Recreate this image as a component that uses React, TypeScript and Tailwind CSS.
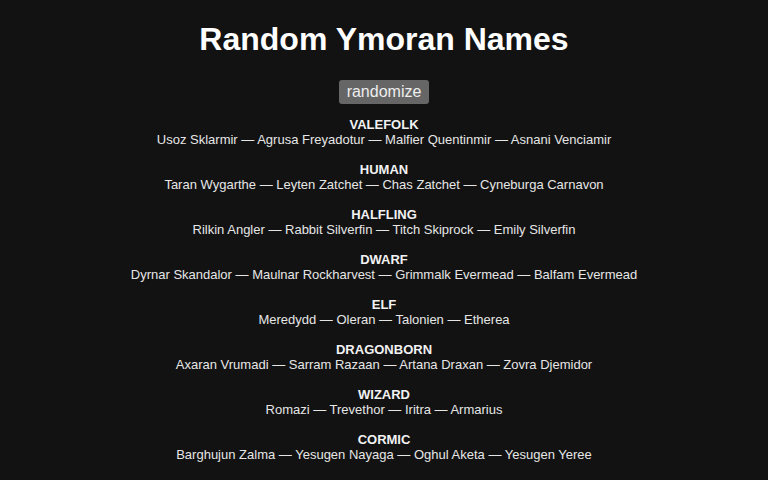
const groups: { race: string; names: string[] }[] = [
  { race: "VALEFOLK", names: ["Usoz Sklarmir", "Agrusa Freyadotur", "Malfier Quentinmir", "Asnani Venciamir"] },
  { race: "HUMAN", names: ["Taran Wygarthe", "Leyten Zatchet", "Chas Zatchet", "Cyneburga Carnavon"] },
  { race: "HALFLING", names: ["Rilkin Angler", "Rabbit Silverfin", "Titch Skiprock", "Emily Silverfin"] },
  { race: "DWARF", names: ["Dyrnar Skandalor", "Maulnar Rockharvest", "Grimmalk Evermead", "Balfam Evermead"] },
  { race: "ELF", names: ["Meredydd", "Oleran", "Talonien", "Etherea"] },
  { race: "DRAGONBORN", names: ["Axaran Vrumadi", "Sarram Razaan", "Artana Draxan", "Zovra Djemidor"] },
  { race: "WIZARD", names: ["Romazi", "Trevethor", "Iritra", "Armarius"] },
  { race: "CORMIC", names: ["Barghujun Zalma", "Yesugen Nayaga", "Oghul Aketa", "Yesugen Yeree"] },
];

export default function App() {
  return (
    <div
      className="min-h-[480px] w-full bg-[#121212] text-white text-center"
      style={{ fontFamily: '"Liberation Sans", Arial, sans-serif' }}
    >
      <h1 className="pt-[21px] text-[32px] leading-[37px] font-bold text-white">Random Ymoran Names</h1>
      <div className="mt-[22px] flex justify-center">
        <button className="h-[24px] px-[8px] rounded-[3px] bg-[#666666] text-[16px] leading-[24px] text-[#eeeeee]">
          randomize
        </button>
      </div>
      <div className="mt-[13px] flex flex-col gap-[15px]">
        {groups.map((g) => (
          <div key={g.race} className="text-[13px] leading-[15px]">
            <div className="font-bold text-[#f2f2f2]">{g.race}</div>
            <div className="text-[#e6e6e6]">{g.names.join(" — ")}</div>
          </div>
        ))}
      </div>
    </div>
  );
}
